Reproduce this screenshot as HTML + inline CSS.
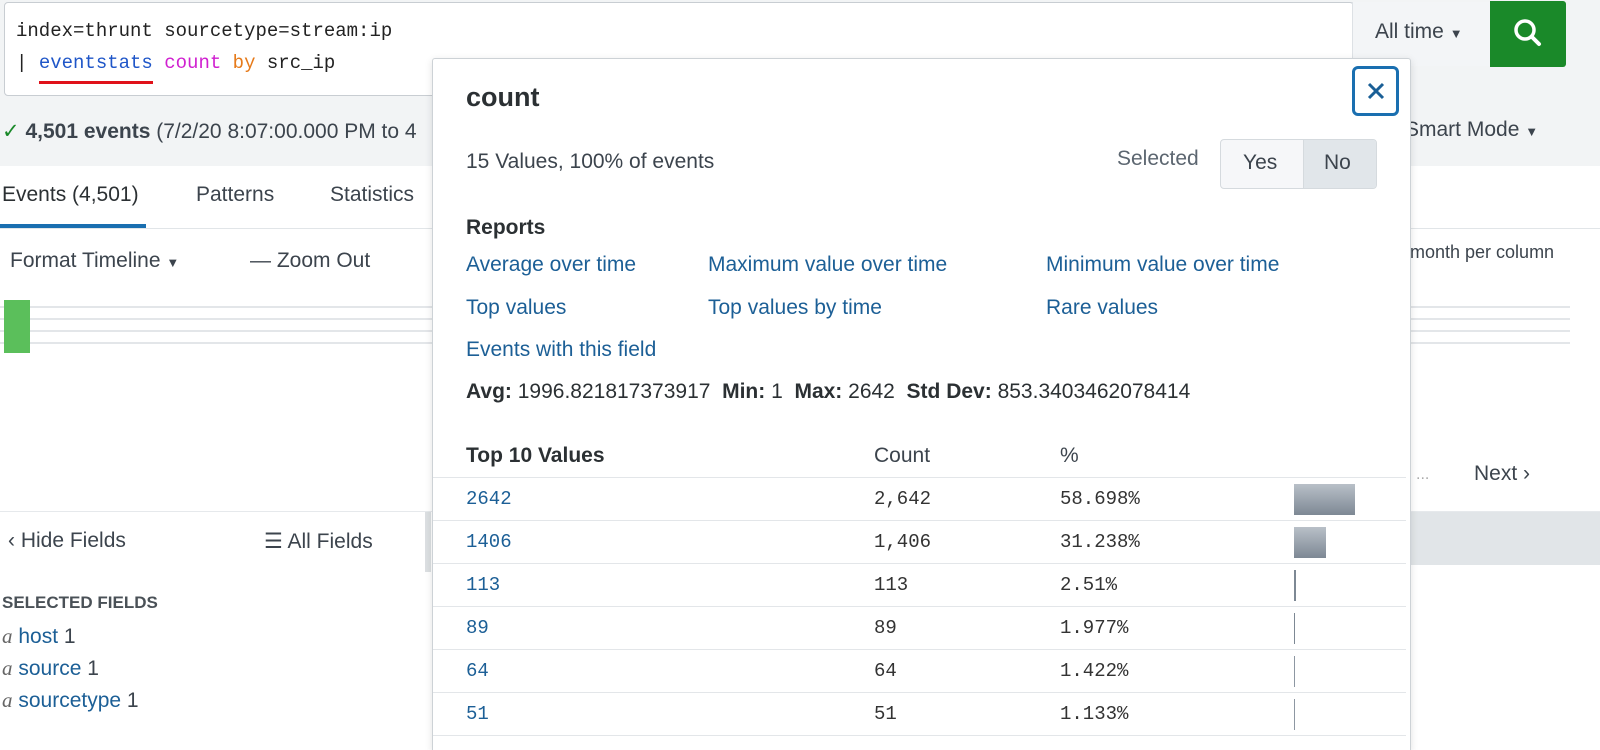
<!DOCTYPE html>
<html><head><meta charset="utf-8"><style>
*{margin:0;padding:0;box-sizing:border-box}
html,body{width:1600px;height:750px;overflow:hidden}
body{background:#fff;font-family:"Liberation Sans",sans-serif;color:#3c444d;position:relative}
.a{position:absolute;white-space:nowrap}
.mono{font-family:"Liberation Mono",monospace}
.lnk{color:#1c5f96}
</style></head><body>
<div class="a" style="left:0;top:0;width:1600px;height:166px;background:#f2f4f5"></div>
<div class="a" style="left:4px;top:2px;width:1350px;height:94px;background:#fff;border:1px solid #c8cdd2;border-radius:4px"></div>
<div class="a mono" style="left:16px;top:20px;font-size:19px;color:#222">index=thrunt sourcetype=stream:ip</div>
<div class="a mono" style="left:16px;top:52px;font-size:19px;color:#222">| <span style="color:#1f56c8">eventstats</span> <span style="color:#d020d0">count</span> <span style="color:#e67a1a">by</span> src_ip</div>
<div class="a" style="left:39px;top:81px;width:114px;height:3px;background:#e0121a"></div>
<div class="a" style="left:1352px;top:2px;width:138px;height:64px;background:#f3f5f7;border-left:1px solid #dde1e5"></div>
<div class="a" style="left:1375px;top:20px;font-size:21px;color:#3c444d">All time <span style="font-size:13px">▼</span></div>
<div class="a" style="left:1490px;top:1px;width:76px;height:66px;background:#1a8929;border-radius:0 3px 3px 0"></div>
<svg class="a" style="left:1512px;top:17px" width="32" height="32" viewBox="0 0 32 32"><circle cx="13" cy="13" r="9" fill="none" stroke="#fff" stroke-width="3.5"/><line x1="20" y1="20" x2="27" y2="27" stroke="#fff" stroke-width="4" stroke-linecap="round"/></svg>
<div class="a" style="left:2px;top:119px;font-size:21px;color:#3c444d"><span style="color:#1a8929">✓</span> <b>4,501 events</b> (7/2/20 8:07:00.000 PM to 4</div>
<div class="a" style="left:1405px;top:118px;font-size:21px">Smart Mode <span style="font-size:13px">▼</span></div>
<div class="a" style="left:2px;top:183px;font-size:21px;color:#2b3033">Events (4,501)</div>
<div class="a" style="left:196px;top:183px;font-size:21px">Patterns</div>
<div class="a" style="left:330px;top:183px;font-size:21px">Statistics</div>
<div class="a" style="left:0;top:224px;width:146px;height:4px;background:#1a6fb0"></div>
<div class="a" style="left:0;top:228px;width:1600px;height:1px;background:#e1e5e8"></div>
<div class="a" style="left:10px;top:249px;font-size:21px">Format Timeline <span style="font-size:13px">▼</span></div>
<div class="a" style="left:250px;top:249px;font-size:21px">— Zoom Out</div>
<div class="a" style="left:1410px;top:242px;font-size:18px">month per column</div>
<div class="a" style="left:0;top:296px;width:1570px;height:58px;background:repeating-linear-gradient(#fff 0,#fff 10px,#e3e6e9 10px,#e3e6e9 12px)"></div>
<div class="a" style="left:4px;top:300px;width:26px;height:53px;background:#5bbf5b"></div>
<div class="a" style="left:1416px;top:466px;font-size:16px;color:#aaa">...</div>
<div class="a" style="left:1474px;top:462px;font-size:21px">Next ›</div>
<div class="a" style="left:0;top:511px;width:1600px;height:1px;background:#e6e9ec"></div>
<div class="a" style="left:1410px;top:512px;width:190px;height:53px;background:#e1e5e8"></div>
<div class="a" style="left:8px;top:529px;font-size:21px">‹ Hide Fields</div>
<div class="a" style="left:264px;top:529px;font-size:21px">☰ All Fields</div>
<div class="a" style="left:2px;top:593px;font-size:17px;font-weight:bold;color:#4a5157">SELECTED FIELDS</div>
<div class="a" style="left:2px;top:624px;font-size:21px"><i style="font-family:'Liberation Serif';color:#666">a</i> <span class="lnk">host</span> 1</div>
<div class="a" style="left:2px;top:656px;font-size:21px"><i style="font-family:'Liberation Serif';color:#666">a</i> <span class="lnk">source</span> 1</div>
<div class="a" style="left:2px;top:688px;font-size:21px"><i style="font-family:'Liberation Serif';color:#666">a</i> <span class="lnk">sourcetype</span> 1</div>
<div class="a" style="left:425px;top:512px;width:6px;height:60px;background:#dcdfe2"></div>
<div class="a" style="left:432px;top:58px;width:979px;height:692px;background:#fff;border:1px solid #cdd2d6;border-bottom:none;border-radius:3px 3px 0 0;box-shadow:0 2px 8px rgba(0,0,0,.12)"></div>
<div class="a" style="left:466px;top:82px;font-size:27px;font-weight:bold;color:#2b3033">count</div>
<div class="a" style="left:1352px;top:66px;width:47px;height:50px;border:3px solid #1a6fb0;border-radius:6px"></div>
<svg class="a" style="left:1366px;top:81px" width="20" height="20"><path d="M3 3L17 17M17 3L3 17" stroke="#1a5f96" stroke-width="3"/></svg>
<div class="a" style="left:466px;top:150px;font-size:21px">15 Values, 100% of events</div>
<div class="a" style="left:1117px;top:147px;font-size:21px;color:#5c6670">Selected</div>
<div class="a" style="left:1220px;top:139px;width:157px;height:50px;border:1px solid #d5dade;border-radius:4px;background:#f6f7f9;overflow:hidden"><div style="position:absolute;left:82px;top:0;width:75px;height:50px;background:#e1e6ea;border-left:1px solid #d5dade"></div></div>
<div class="a" style="left:1243px;top:151px;font-size:21px">Yes</div>
<div class="a" style="left:1324px;top:151px;font-size:21px">No</div>
<div class="a" style="left:466px;top:216px;font-size:21px;font-weight:bold;color:#2b3033">Reports</div>
<div class="a lnk" style="left:466px;top:253px;font-size:21px">Average over time</div>
<div class="a lnk" style="left:708px;top:253px;font-size:21px">Maximum value over time</div>
<div class="a lnk" style="left:1046px;top:253px;font-size:21px">Minimum value over time</div>
<div class="a lnk" style="left:466px;top:296px;font-size:21px">Top values</div>
<div class="a lnk" style="left:708px;top:296px;font-size:21px">Top values by time</div>
<div class="a lnk" style="left:1046px;top:296px;font-size:21px">Rare values</div>
<div class="a lnk" style="left:466px;top:338px;font-size:21px">Events with this field</div>
<div class="a" style="left:466px;top:380px;font-size:21px;color:#2b3033"><b>Avg:</b> 1996.821817373917&nbsp; <b>Min:</b> 1&nbsp; <b>Max:</b> 2642&nbsp; <b>Std Dev:</b> 853.3403462078414</div>
<div class="a" style="left:466px;top:444px;font-size:21px;font-weight:bold;color:#2b3033">Top 10 Values</div>
<div class="a" style="left:874px;top:444px;font-size:21px">Count</div>
<div class="a" style="left:1060px;top:444px;font-size:21px">%</div>
<div class="a" style="left:433px;top:477px;width:973px;height:273px;background:repeating-linear-gradient(#e3e6e9 0,#e3e6e9 1px,transparent 1px,transparent 43px)"></div>
<div class="a mono" style="left:466px;top:478px;font-size:19px;line-height:43px">
<div class="lnk">2642</div><div class="lnk">1406</div><div class="lnk">113</div><div class="lnk">89</div><div class="lnk">64</div><div class="lnk">51</div></div>
<div class="a mono" style="left:874px;top:478px;font-size:19px;line-height:43px;color:#333"><div>2,642</div><div>1,406</div><div>113</div><div>89</div><div>64</div><div>51</div></div>
<div class="a mono" style="left:1060px;top:478px;font-size:19px;line-height:43px;color:#333"><div>58.698%</div><div>31.238%</div><div>2.51%</div><div>1.977%</div><div>1.422%</div><div>1.133%</div></div>
<div class="a" style="left:1294px;top:484px;width:61px;height:31px;background:linear-gradient(#b9c0c8,#7d8894)"></div>
<div class="a" style="left:1294px;top:527px;width:32px;height:31px;background:linear-gradient(#b9c0c8,#7d8894)"></div>
<div class="a" style="left:1294px;top:570px;width:2px;height:31px;background:#7d8894"></div>
<div class="a" style="left:1294px;top:613px;width:1px;height:31px;background:#7d8894"></div>
<div class="a" style="left:1294px;top:656px;width:1px;height:31px;background:#8d97a2"></div>
<div class="a" style="left:1294px;top:699px;width:1px;height:31px;background:#8d97a2"></div>
</body></html>
